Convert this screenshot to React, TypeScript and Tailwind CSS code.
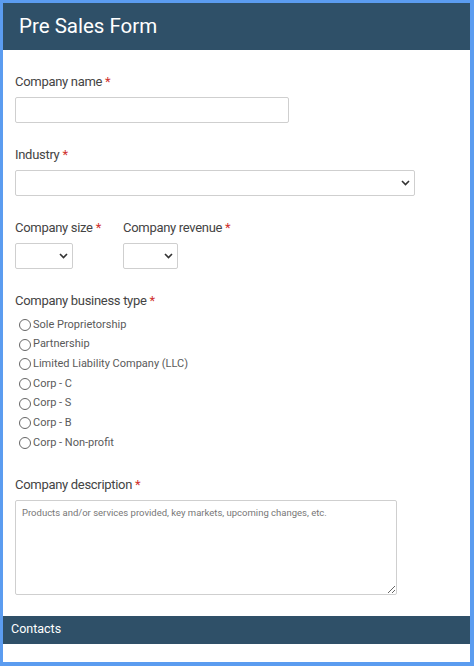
const businessTypes = [
  "Sole Proprietorship",
  "Partnership",
  "Limited Liability Company (LLC)",
  "Corp - C",
  "Corp - S",
  "Corp - B",
  "Corp - Non-profit",
];

function Label({ text }: { text: string }) {
  return (
    <div className="text-[13px] leading-5 tracking-[-0.3px] text-[#444]">
      {text} <span className="text-[#d0312d]">*</span>
    </div>
  );
}

function Select({ width }: { width: string }) {
  return (
    <div className={`relative mt-[5px] h-[26px] ${width}`}>
      <select className="h-full w-full appearance-none rounded-[2px] border border-[#cfcfcf] bg-white outline-none" />
      <svg
        className="pointer-events-none absolute right-[5px] top-[10px]"
        width="9"
        height="6"
        viewBox="0 0 9 6"
      >
        <path d="M1 1l3.5 3.5L8 1" fill="none" stroke="#333" strokeWidth="1.6" />
      </svg>
    </div>
  );
}

export default function App() {
  return (
    <div
      className="box-border flex h-[666px] w-[474px] flex-col border-b-4 border-l-[3px] border-r-4 border-t-[3px] border-[#5b9cf0] bg-white"
      style={{ fontFamily: "Roboto, 'Liberation Sans', sans-serif" }}
    >
      <div className="flex h-[47px] shrink-0 items-center bg-[#2f5068] pl-4">
        <h1 className="text-[20.5px] font-normal text-white">Pre Sales Form</h1>
      </div>

      <div className="flex flex-col pl-3">
        {/* Company name */}
        <div className="mt-[22px]">
          <Label text="Company name" />
          <input className="mt-[5px] h-[26px] w-[274px] rounded-[2px] border border-[#cfcfcf] outline-none" />
        </div>

        {/* Industry */}
        <div className="mt-[22px]">
          <Label text="Industry" />
          <Select width="w-[400px]" />
        </div>

        {/* Size + revenue */}
        <div className="mt-[22px] flex">
          <div className="w-[108px]">
            <Label text="Company size" />
            <Select width="w-[58px]" />
          </div>
          <div>
            <Label text="Company revenue" />
            <Select width="w-[55px]" />
          </div>
        </div>

        {/* Business type */}
        <div className="mt-[22px]">
          <Label text="Company business type" />
          <div className="mt-[4px] flex flex-col">
            {businessTypes.map((t) => (
              <label key={t} className="flex h-[19.7px] items-center pl-1 text-[11px] text-[#5a5a5a]">
                <span className="mr-[2px] box-border h-3 w-3 rounded-full border border-[#666] bg-white" />
                {t}
              </label>
            ))}
          </div>
        </div>

        {/* Description */}
        <div className="mt-[22px]">
          <Label text="Company description" />
          <textarea
            className="mt-[5px] box-border block h-[95px] w-[382px] rounded-[2px] border border-[#cfcfcf] px-[6px] py-[5px] text-[9.5px] text-[#555] outline-none placeholder:text-[#777]"
            placeholder="Products and/or services provided, key markets, upcoming changes, etc."
          />
        </div>
      </div>

      <div className="mt-[21px] flex h-[28px] shrink-0 items-center bg-[#2f5068] pl-2">
        <span className="text-[12.5px] text-white">Contacts</span>
      </div>
    </div>
  );
}
